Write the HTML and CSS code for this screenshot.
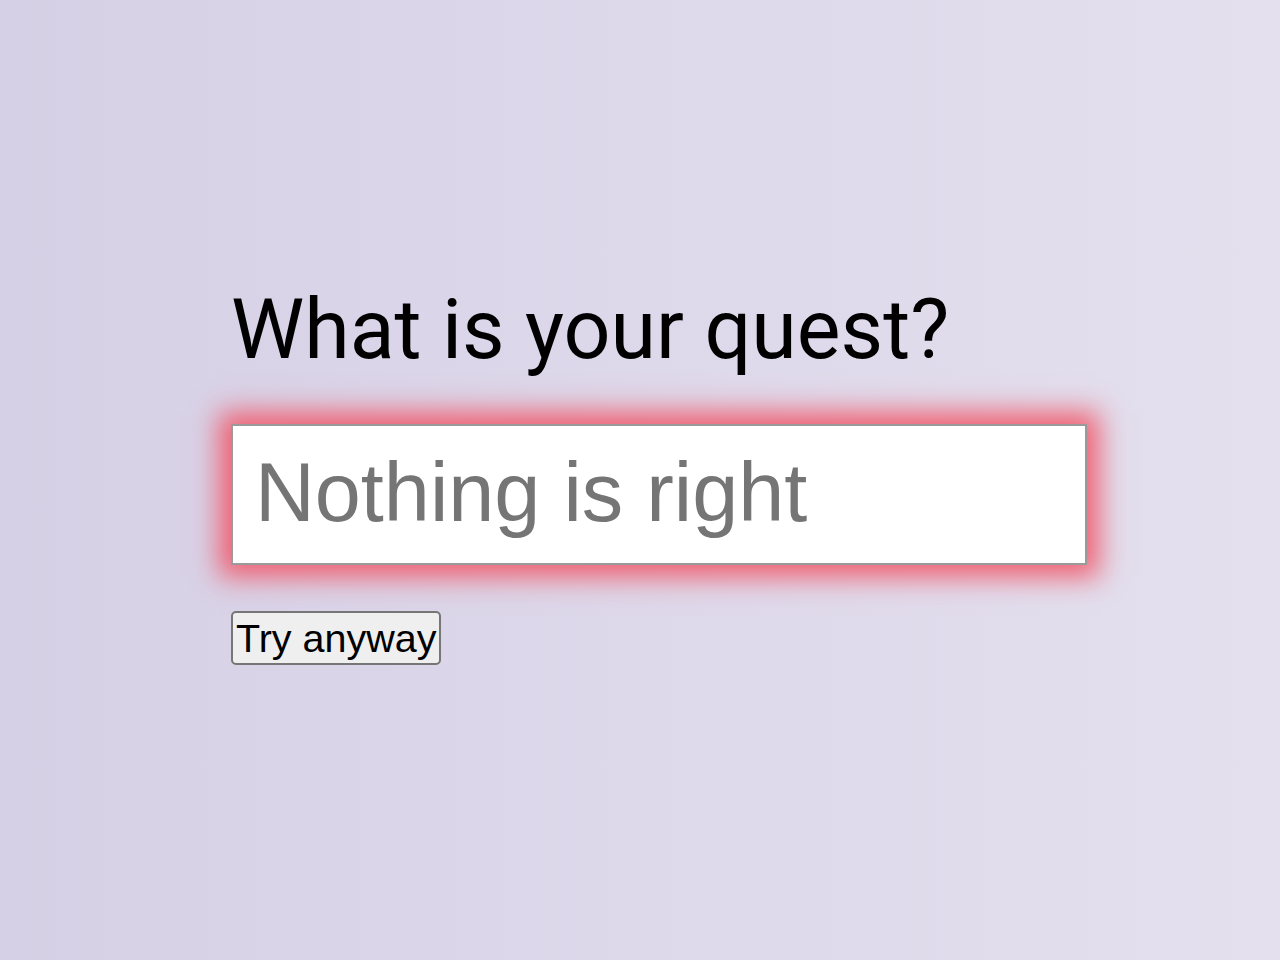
FILE: index.html
```html
<!DOCTYPE html>
<html lang="en">
<head>
<meta charset="utf-8">
<title>Quest</title>
<link rel="stylesheet" href="styles.css">
</head>
<body>
<main class="page">
  <form class="quest">
    <h1 class="quest-title">What is your quest?</h1>
    <input class="quest-input" type="text" placeholder="Nothing is right">
    <div><button class="quest-button" type="button">Try anyway</button></div>
  </form>
</main>
</body>
</html>
```
FILE: styles.css
```css
html, body {
  margin: 0;
  height: 100%;
}
body {
  background: linear-gradient(to right, #d6d0e6, #e4e0ee);
  font-family: "Liberation Sans", Arial, sans-serif;
}
.page {
  padding: 282px 0 0 231px;
  box-sizing: border-box;
  height: 960px;
}
.quest {
  display: flex;
  flex-direction: column;
  gap: 46px;
  width: 856px;
}
.quest-title {
  margin: 0;
  font-family: Roboto, sans-serif;
  font-weight: 400;
  font-size: 82.5px;
  line-height: 96px;
  color: #000;
}
.quest-input {
  box-sizing: border-box;
  width: 856px;
  height: 141px;
  margin: 0;
  padding: 18px 22px 22px;
  border: 2px solid #9a9a9a;
  background: #fff;
  font-family: "Liberation Sans", Arial, sans-serif;
  font-size: 82.8px;
  box-shadow: 0 0 26px 12px rgba(240, 88, 106, 0.95);
  outline: none;
}
.quest-input::placeholder {
  color: #757575;
}
.quest-button {
  margin: 0;
  padding: 1px 3px;
  border: 2px solid #767676;
  border-radius: 5px;
  background: #efefef;
  font-family: "Liberation Sans", Arial, sans-serif;
  font-size: 39.5px;
  color: #000;
  height: 54px;
}
```
